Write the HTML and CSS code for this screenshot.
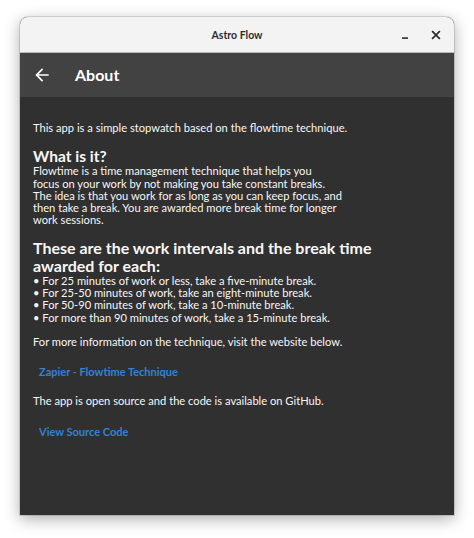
FILE: index.html
```html
<!DOCTYPE html>
<html>
<head>
<meta charset="utf-8">
<link rel="stylesheet" href="styles.css">
</head>
<body>
<div class="window">
  <div class="titlebar">
    <span class="title">Astro Flow</span>
    <div class="controls">
      <svg class="ctl-min" width="10" height="10" viewBox="0 0 10 10"><rect x="2" y="7.3" width="6" height="1.6" fill="#2e2e2e"/></svg>
      <svg class="ctl-close" width="10" height="10" viewBox="0 0 10 10"><path d="M1.7 1.7 L8.3 8.3 M8.3 1.7 L1.7 8.3" stroke="#2e2e2e" stroke-width="1.7" stroke-linecap="square"/></svg>
    </div>
  </div>
  <div class="appbar">
    <svg class="back" width="20" height="20" viewBox="0 0 24 24"><path d="M20 11H7.83l5.59-5.59L12 4l-8 8 8 8 1.410-1.41L7.83 13H20v-2z" fill="#ffffff"/></svg>
    <h1 class="appbar-title">About</h1>
  </div>
  <main class="content">
    <p class="text">This app is a simple stopwatch based on the flowtime technique.</p>
    <h2 class="heading heading-first">What is it?</h2>
    <p class="text">Flowtime is a time management technique that helps you<br>focus on your work by not making you take constant breaks.<br>The idea is that you work for as long as you can keep focus, and<br>then take a break. You are awarded more break time for longer<br>work sessions.</p>
    <h2 class="heading heading-gap">These are the work intervals and the break time<br>awarded for each:</h2>
    <p class="text">• For 25 minutes of work or less, take a five-minute break.<br>• For 25-50 minutes of work, take an eight-minute break.<br>• For 50-90 minutes of work, take a 10-minute break.<br>• For more than 90 minutes of work, take a 15-minute break.</p>
    <p class="text text-gap">For more information on the technique, visit the website below.</p>
    <div class="btn-row"><a class="link">Zapier - Flowtime Technique</a></div>
    <p class="text">The app is open source and the code is available on GitHub.</p>
    <div class="btn-row"><a class="link">View Source Code</a></div>
  </main>
</div>
</body>
</html>
```
FILE: styles.css
```css
html, body {
  margin: 0;
  padding: 0;
  background: #ffffff;
}
body {
  width: 474px;
  height: 538px;
  overflow: hidden;
  font-family: Lato, "Noto Sans", sans-serif;
}
.window {
  margin: 17px 0 0 20px;
  width: 434px;
  height: 498px;
  border-radius: 8px 8px 0 0;
  background: #303030;
  box-shadow: 0 0 0 1px rgba(0,0,0,0.12), 0 4px 16px rgba(0,0,0,0.33);
  display: flex;
  flex-direction: column;
  overflow: hidden;
}
.titlebar {
  height: 35px;
  flex: none;
  background: #f3f3f3;
  border-bottom: 1px solid #b9b9b9;
  position: relative;
  display: flex;
  align-items: center;
  justify-content: center;
}
.title {
  font-weight: 700;
  font-size: 10.5px;
  color: #2d2d2d;
}
.controls {
  position: absolute;
  right: 13px;
  top: 13px;
  display: flex;
  gap: 21px;
}
.controls svg { display: block; }
.appbar {
  height: 44px;
  flex: none;
  background: #424242;
  display: flex;
  align-items: center;
  padding-left: 12px;
}
.back { display: block; flex: none; }
.appbar-title {
  margin: 0 0 0 23px;
  font-size: 16px;
  font-weight: 700;
  color: #ffffff;
  line-height: 20px;
}
.content {
  flex: 1;
  padding: 25px 12px 0 13px;
  color: #f7f7f7;
}
.text {
  margin: 0;
  font-size: 11.15px;
  line-height: 12.3px;
}
.text-gap { margin-top: 12px; }
.heading {
  margin: 0;
  font-size: 16px;
  font-weight: 700;
  line-height: 18px;
  color: #f7f7f7;
}
.heading-first { margin-top: 13px; font-size: 15.5px; }
.heading-gap { margin-top: 12px; }
.btn-row {
  height: 47px;
  display: flex;
  align-items: center;
  padding-left: 6px;
}
.link {
  font-size: 11px;
  font-weight: 700;
  color: #3382d2;
}
```
